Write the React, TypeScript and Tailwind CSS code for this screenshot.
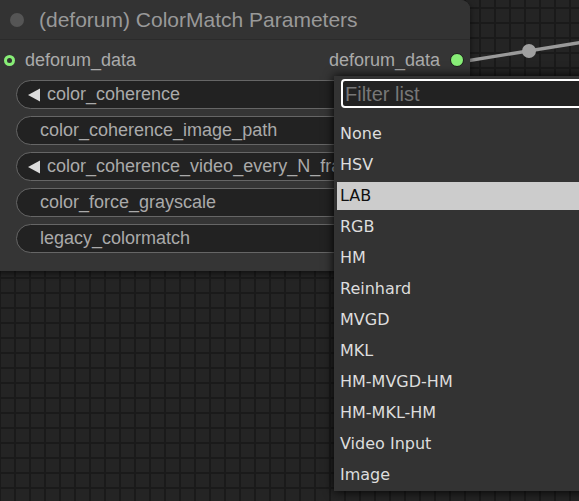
import React from "react";

const widgets = [
  { label: "color_coherence", arrow: true },
  { label: "color_coherence_image_path", arrow: false },
  { label: "color_coherence_video_every_N_frames", arrow: true },
  { label: "color_force_grayscale", arrow: false },
  { label: "legacy_colormatch", arrow: false },
];

const options = [
  "None",
  "HSV",
  "LAB",
  "RGB",
  "HM",
  "Reinhard",
  "MVGD",
  "MKL",
  "HM-MVGD-HM",
  "HM-MKL-HM",
  "Video Input",
  "Image",
];

function LeftArrow() {
  return (
    <svg width="14" height="14" viewBox="0 0 14 14" className="shrink-0">
      <polygon points="13,0.5 13,13.5 1,7" fill="#dddddd" />
    </svg>
  );
}

function WidgetPill({ label, arrow }: { label: string; arrow: boolean }) {
  return (
    <div className="flex h-[29px] items-center overflow-hidden rounded-full border border-[#666] bg-[#222] pl-[10px] whitespace-nowrap">
      {arrow ? (
        <>
          <LeftArrow />
          <span className="ml-[6px] text-[#aaa]">{label}</span>
        </>
      ) : (
        <span className="ml-[13px] text-[#aaa]">{label}</span>
      )}
    </div>
  );
}

function Node() {
  return (
    <div className="absolute top-0 left-[-6px] w-[476px] rounded-tr-[9px] rounded-b-[6px] bg-[#353535] font-['Liberation_Sans',Arial,sans-serif] text-[18px] shadow-[0_2px_6px_rgba(0,0,0,0.6)]">
      {/* title */}
      <div className="flex h-[40px] items-center rounded-tr-[9px] border-b border-[#2b2b2b] bg-[#333] pl-[16px]">
        <div className="h-[14px] w-[14px] rounded-full bg-[#555]" />
        <span className="ml-[15px] text-[21px] text-[#999]">
          (deforum) ColorMatch Parameters
        </span>
      </div>

      {/* body */}
      <div className="pb-[18px]">
        <div className="flex h-[40px] items-center justify-between pr-[6px] pl-[10px] text-[#aaa]">
          <div className="flex items-center">
            <div className="flex h-[11px] w-[11px] items-center justify-center rounded-full bg-[#88ee77]">
              <div className="h-[5px] w-[5px] rounded-full bg-[#333]" />
            </div>
            <span className="ml-[10px]">deforum_data</span>
          </div>
          <div className="flex items-center">
            <span>deforum_data</span>
            <div className="ml-[10px] h-[14px] w-[14px] rounded-full border border-[#1c1c1c] bg-[#88ee77]" />
          </div>
        </div>

        <div className="flex flex-col gap-[7px] pr-[15px] pl-[22px]">
          {widgets.map((w) => (
            <WidgetPill key={w.label} label={w.label} arrow={w.arrow} />
          ))}
        </div>
      </div>
    </div>
  );
}

function ComboMenu() {
  return (
    <div className="absolute top-[76px] left-[334px] w-[270px] bg-[#333] pt-[3px] pb-[2px] shadow-[0_0_10px_black]">
      <div className="mx-[7px] flex h-[29px] items-center rounded-[4px] border-2 border-white bg-[#222] pl-[2px] font-['Liberation_Sans',Arial,sans-serif] text-[20px] text-[#777]">
        Filter list
      </div>
      <div className="mt-[12px] flex flex-col gap-[3px] font-['DejaVu_Sans',Verdana,sans-serif] text-[16px]">
        {options.map((o) =>
          o === "LAB" ? (
            <div
              key={o}
              className="ml-[3px] flex h-[28px] items-center bg-[#cccccc] pl-[3px] text-[#111]"
            >
              {o}
            </div>
          ) : (
            <div
              key={o}
              className="ml-[3px] flex h-[28px] items-center pl-[3px] text-[#dddddd]"
            >
              {o}
            </div>
          )
        )}
      </div>
    </div>
  );
}

export default function App() {
  return (
    <div className="relative h-[501px] w-[579px] overflow-hidden bg-[#242424] bg-[linear-gradient(to_right,#1a1a1a_2px,transparent_2px),linear-gradient(to_bottom,#1a1a1a_2px,transparent_2px)] bg-size-[15px_15px] bg-position-[14px_7px]">
      {/* link wire */}
      <svg className="absolute inset-0" width="579" height="501">
        <line
          x1="463"
          y1="61.5"
          x2="590"
          y2="41"
          stroke="#9a9a9a"
          strokeWidth="3.3"
        />
        <circle cx="529" cy="51" r="7" fill="#a0a0a0" />
      </svg>
      <Node />
      <ComboMenu />
    </div>
  );
}
